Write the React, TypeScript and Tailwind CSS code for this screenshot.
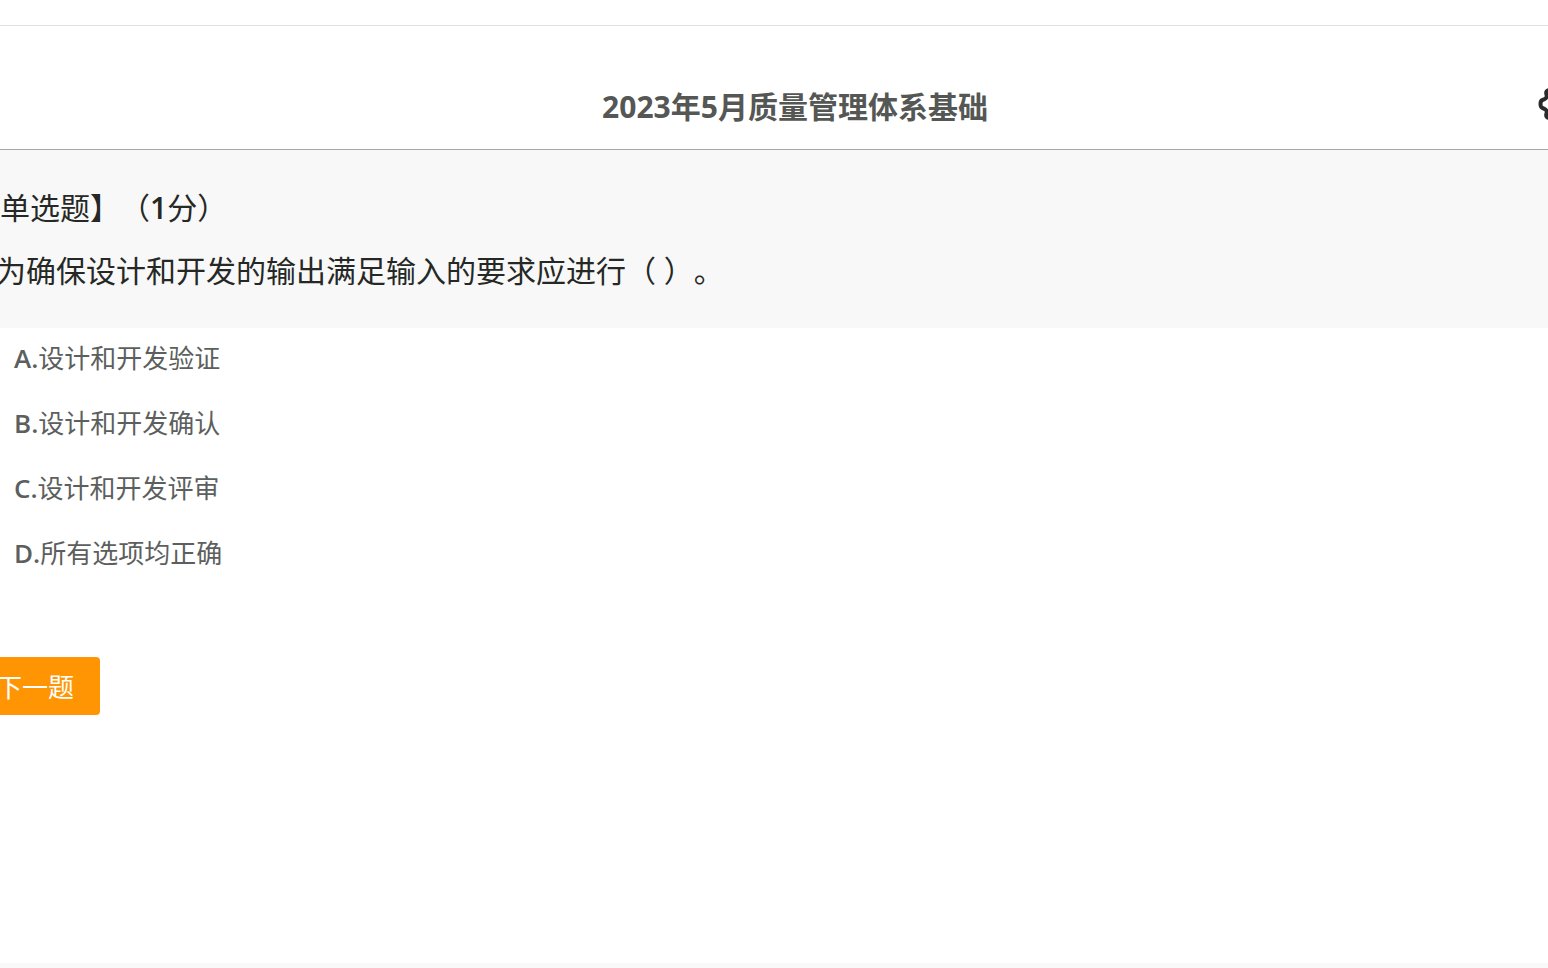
import { useState } from 'react';

const options = [
	{ key: 'A', text: '设计和开发验证' },
	{ key: 'B', text: '设计和开发确认' },
	{ key: 'C', text: '设计和开发评审' },
	{ key: 'D', text: '所有选项均正确' },
];

function GearIcon() {
	return (
		<svg
			className="h-9 w-9"
			viewBox="0 0 36 36"
			fill="none"
			stroke="#2b2b2b"
			strokeWidth="4"
			strokeLinejoin="round"
			aria-hidden="true"
		>
			<path d="M2.5 18 C2.5 15.5 3 14.5 4.5 14 C7.5 13 9.5 11.5 8.5 8.5 C7.5 5.5 9 4 11.5 4 C14.5 4.5 15 2.5 18 2.5 C21 2.5 21.5 4.5 24.5 4 C27 4 28.5 5.5 27.5 8.5 C26.5 11.5 28.5 13 31.5 14 C33 14.5 33.5 15.5 33.5 18 C33.5 20.5 33 21.5 31.5 22 C28.5 23 26.5 24.5 27.5 27.5 C28.5 30.5 27 32 24.5 32 C21.5 31.5 21 33.5 18 33.5 C15 33.5 14.5 31.5 11.5 32 C9 32 7.5 30.5 8.5 27.5 C9.5 24.5 7.5 23 4.5 22 C3 21.5 2.5 20.5 2.5 18 Z" />
			<circle cx="18" cy="18" r="5" />
		</svg>
	);
}

function Header() {
	return (
		<header className="relative flex h-[124px] items-center justify-center border-b border-[#a6a6a6] pt-[38px] pl-[42px]">
			<h1 className="text-[30px] leading-[40px] font-bold text-[#555755]">2023年5月质量管理体系基础</h1>
			<button
				type="button"
				aria-label="设置"
				className="absolute top-[60px] -right-[26px]"
			>
				<GearIcon />
			</button>
		</header>
	);
}

function Question() {
	return (
		<section className="-ml-[30px] bg-[#f8f8f8] py-[26px] text-[30px] leading-[63px] text-[#262826]">
			<p>
				【单选题】（<span className="font-semibold">1</span>分）
			</p>
			<p className="pl-[26px]">为确保设计和开发的输出满足输入的要求应进行（ ）。</p>
		</section>
	);
}

export default function App() {
	const [answer, setAnswer] = useState('');

	return (
		<div className="flex min-h-screen flex-col overflow-hidden bg-white font-['Open_Sans','Noto_Sans_CJK_SC',sans-serif] [text-spacing-trim:space-all]">
			<div className="h-[26px] border-b border-[#e2e2e2]" />
			<Header />
			<main className="flex-1">
				<Question />
				<fieldset className="flex flex-col gap-1 text-[26px] leading-[61px] text-[#5c5f5e]">
					{options.map((option) => (
						<label
							key={option.key}
							className="cursor-pointer pl-[14px]"
						>
							<input
								type="radio"
								name="answer"
								value={option.key}
								checked={answer === option.key}
								onChange={() => setAnswer(option.key)}
								className="sr-only"
							/>
							<span className="font-semibold">{option.key}.</span>
							{option.text}
						</label>
					))}
				</fieldset>
				<button
					type="button"
					className="mt-[73px] -ml-[30px] h-[58px] rounded-[4px] bg-[#ff9502] px-[26px] pt-[2px] text-[26px] text-white"
				>
					下一题
				</button>
			</main>
			<footer className="h-[5px] bg-[#f9f9f9]" />
		</div>
	);
}
